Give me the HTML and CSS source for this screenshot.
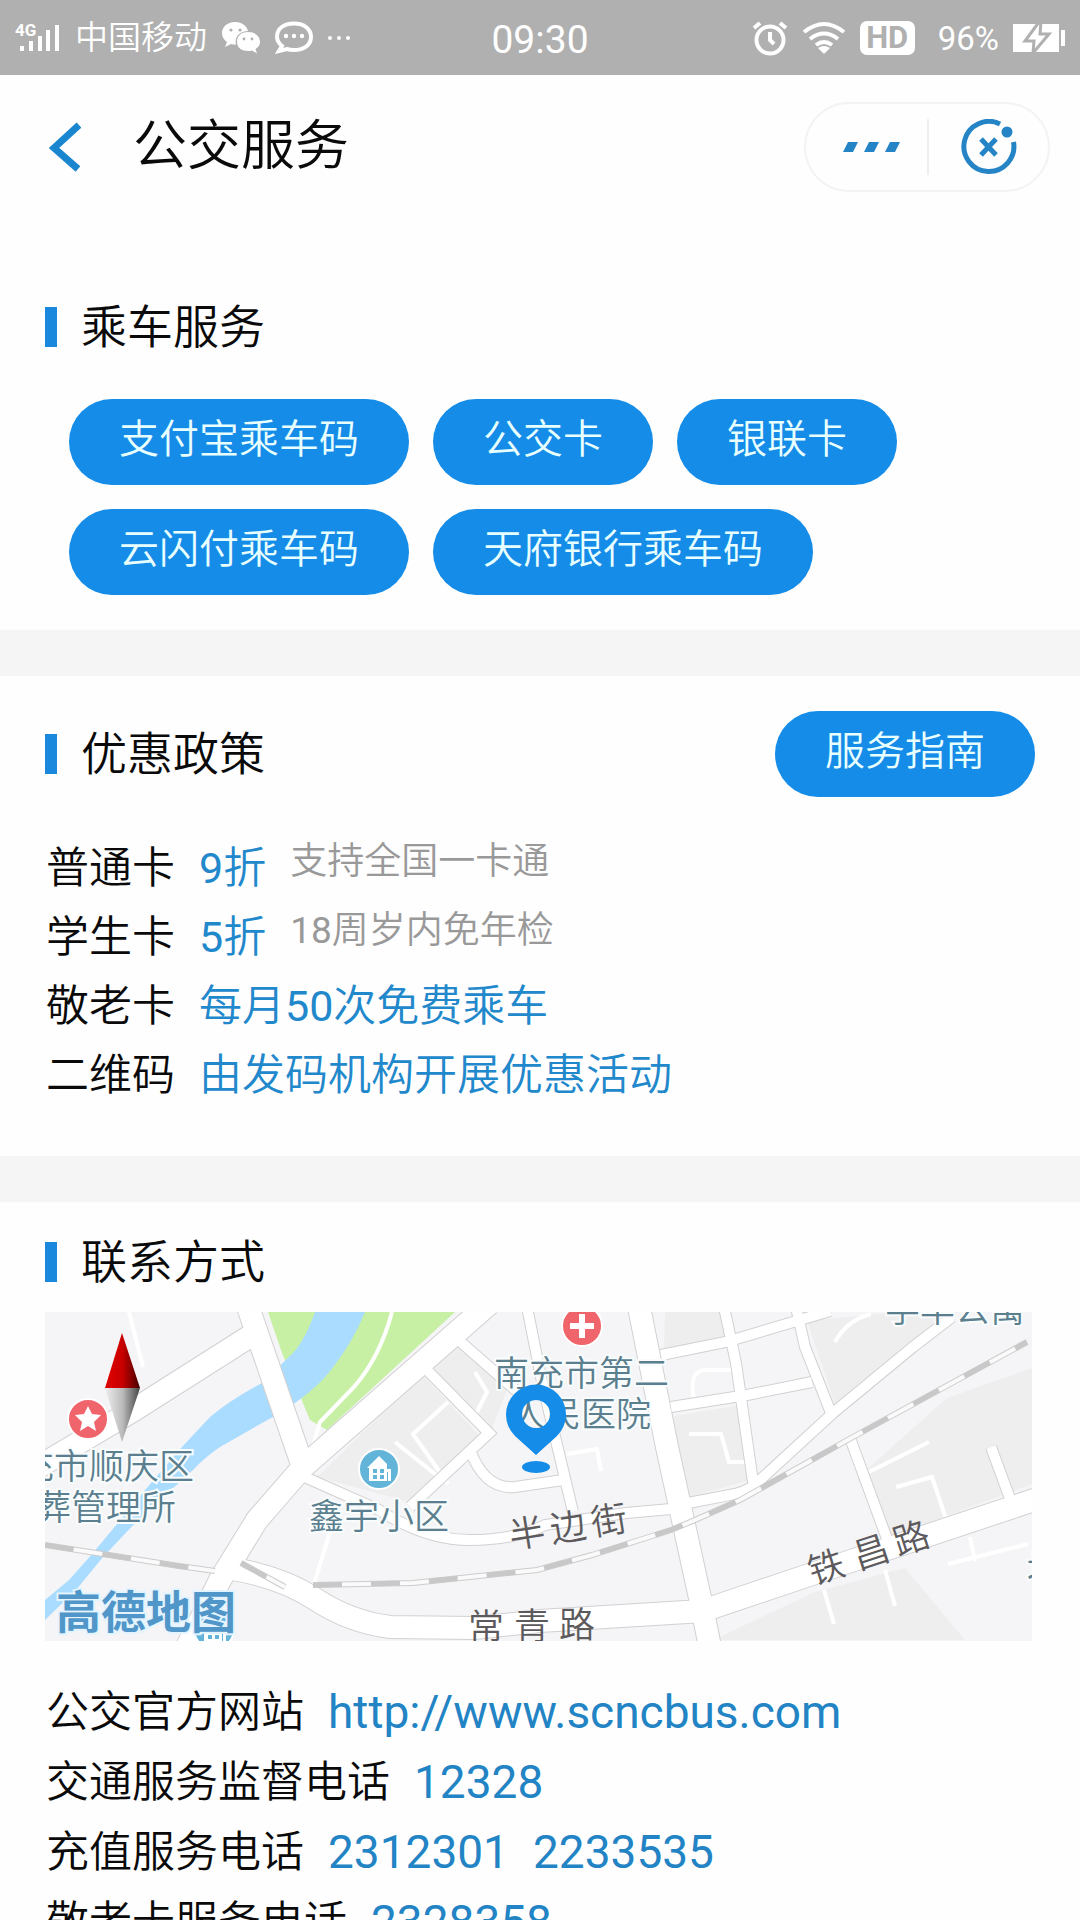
FILE: index.html
```html
<!DOCTYPE html>
<html lang="zh-CN">
<head>
<meta charset="utf-8">
<meta name="viewport" content="width=device-width, initial-scale=1">
<title>公交服务</title>
<link rel="stylesheet" href="styles.css">
</head>
<body>
<div class="status">
  <div class="status-group">
    <svg class="signal" width="46" height="32" viewBox="0 0 46 32" aria-hidden="true">
      <text class="signal-text" x="0" y="14">4G</text>
      <path d="M5 24h4v5h-4zM14 19h4v10h-4zM23 14h4v15h-4zM31 8h4v21h-4zM40 3h4v26h-4z"/>
    </svg>
    <span class="carrier">中国移动</span>
    <svg class="wechat" width="40" height="34" viewBox="0 0 40 34" aria-hidden="true">
      <path d="M14 1C6 1 1 6 1 12c0 4 2 7 5 9l-2 5 6-3c2 .5 3 .6 5 .5C13 15 20 10 27 10 26 5 21 1 14 1z"/>
      <path d="M27 11c-7 0-11 4-11 10s5 9 11 9c1.500 0 3 0 4-.6l5 3-1.500-4.400c3-2 4.500-4 4.500-7 0-6-5-10-12-10z"/>
      <g class="cut"><circle cx="10" cy="9" r="1.600"/><circle cx="19" cy="9" r="1.600"/><circle cx="23" cy="18" r="1.400"/><circle cx="31" cy="18" r="1.400"/></g>
    </svg>
    <svg width="38" height="34" viewBox="1 0 38 34" aria-hidden="true">
      <path class="line" d="M20 2.500c-10 0-17 5-17 13 0 4 2 7 5 9.500L5 30l8-2c2 .7 5 1 7 1 10 0 17-5 17-13S30 2.500 20 2.500z"/>
      <circle cx="12" cy="15" r="2.200"/><circle cx="20" cy="15" r="2.200"/><circle cx="28" cy="15" r="2.200"/>
    </svg>
    <svg width="24" height="34" viewBox="0 0 24 34" aria-hidden="true"><circle cx="3" cy="17" r="2"/><circle cx="12" cy="17" r="2"/><circle cx="21" cy="17" r="2"/></svg>
  </div>
  <time class="clock">09:30</time>
  <div class="status-group status-right">
    <svg width="36" height="36" viewBox="0 0 36 36" aria-hidden="true">
      <circle class="line" cx="18" cy="20" r="13.500"/><path class="line" d="M18 12v8l4 4M2 8l6-5M34 8l-6-5"/>
    </svg>
    <svg width="44" height="34" viewBox="0 0 44 34" aria-hidden="true">
      <path class="line" d="M2 11q20-16 40 0M8 18q14-11 28 0M14 24q8-6 16 0"/><path d="M16 27q6-4 12 0l-6 6z"/>
    </svg>
    <span class="hd">HD</span>
    <span class="percent">96%</span>
    <svg width="52" height="32" viewBox="0 0 52 32" aria-hidden="true">
      <path d="M0 2h46v28H0zM48 8h4v16h-4z"/>
      <path class="bolt" d="M26 0L12 19h9l-1 12 16-19h-9l1-12z"/>
    </svg>
  </div>
</div>

<header class="nav">
  <button class="back" type="button" aria-label="返回">
    <svg width="36" height="50" viewBox="0 0 36 50" aria-hidden="true"><path d="M34 3L9 26 33 47" /></svg>
  </button>
  <h1 class="nav-title">公交服务</h1>
  <div class="capsule">
    <button type="button" aria-label="更多">
      <svg width="58" height="10" viewBox="0 0 58 10" aria-hidden="true"><path d="M5 0h10l-5 10H0zM26 0h10l-5 10H21zM47 0h10l-5 10H42z"/></svg>
    </button>
    <button type="button" aria-label="关闭">
      <svg width="56" height="56" viewBox="0 0 56 56" aria-hidden="true">
        <path class="ring" d="M39 5A25 25 0 1 0 52.500 23"/>
        <path class="cross" d="M20 20l15 16M35 20L20 36"/>
        <circle cx="46" cy="13" r="5.500"/>
      </svg>
    </button>
  </div>
</header>

<main class="content">
  <section class="card rides">
    <h2 class="heading">乘车服务</h2>
    <div class="pills">
      <button class="pill" type="button">支付宝乘车码</button>
      <button class="pill" type="button">公交卡</button>
      <button class="pill" type="button">银联卡</button>
      <button class="pill" type="button">云闪付乘车码</button>
      <button class="pill" type="button">天府银行乘车码</button>
    </div>
  </section>

  <section class="card policy">
    <div class="card-head">
      <h2 class="heading">优惠政策</h2>
      <button class="pill" type="button">服务指南</button>
    </div>
    <dl class="rows">
      <div class="row"><dt>普通卡</dt><dd class="offer"><span class="num">9</span>折</dd><dd class="hint">支持全国一卡通</dd></div>
      <div class="row"><dt>学生卡</dt><dd class="offer"><span class="num">5</span>折</dd><dd class="hint"><span class="num">18</span>周岁内免年检</dd></div>
      <div class="row"><dt>敬老卡</dt><dd class="offer">每月<span class="num">50</span>次免费乘车</dd></div>
      <div class="row"><dt>二维码</dt><dd class="offer">由发码机构开展优惠活动</dd></div>
    </dl>
  </section>

  <section class="card contact">
    <h2 class="heading">联系方式</h2>
    <svg class="map" viewBox="0 0 987 329" role="img" aria-label="地图">
      <defs>
        <linearGradient id="needle-red"><stop offset="0" stop-color="#e00000"/><stop offset=".5" stop-color="#c80000"/><stop offset="1" stop-color="#400"/></linearGradient>
        <linearGradient id="needle-gray"><stop offset="0" stop-color="#eee"/><stop offset=".5" stop-color="#bbb"/><stop offset="1" stop-color="#444"/></linearGradient>
        <g id="house"><circle class="poi-blue" r="20"/><path class="poi-mark" d="M-12-1L0-13 8-5v5h4v12h-22V-1z"/><path class="poi-hole" d="M-6 0h4v4h-4zM1 0h4v4h-4zM-6 6h4v4h-4zM1 6h4v4h-4zM8 3h1v9h-1z"/></g>
        <path id="main-roads" d="M203-5L258 155M215 18L89 98-5 154M444-8L258 155 212 208 175 268 142 335M182 256Q235 264 270 287T345 315L430 316 495 309 657 299 770 261 995 186M594-5L622 135 657 295 665 335"/>
        <path id="side-roads" d="M616 43L681 30 785-1M626 95L702 83 767 70M679-5L691 51 708 170M751-5L760 35 786 101M643 191L690 182Q706 178 715 168L788 101 868 35 907 5M805 126L845 235M946 135L967 192M382 58L444 121 365 195M410 25L475 82M255 163L334 198Q380 228 425 228T500 213L581 201 626 197M425 138Q440 178 470 175L518 168M482-5L497 70 528 200"/>
      </defs>
      <rect class="land" width="987" height="329"/>
      <path class="block" d="M377 63L403 90 434 123 365 190 272 165zM620 0h56l5 25-62 14zM628 104l68-11 10 75-66 18zM762 9l90-9h60L790 92zM812 166l90-80 85-30v116L845 225zM770 280l90-24 60 72H668zM386 55l30-28 50 40-20 52z"/>
      <path class="green" d="M223 0H410L282 118 265 108 237 41z"/>
      <path class="water" d="M270 0H320Q308 30 286 58T217 111L175 135Q160 145 148 158L93 208 58 245 31 278 0 308V288L24 268 48 241 106 171 137 135 165 105Q185 88 217 71L248 41Q260 28 270 0z"/>
      <path class="lane" d="M347 0Q335 45 309 75L275 110 266 140M84 0l14 55M430 60l12 20-10 20M350 130l50 40M403 90l-35 32 35 50M265 285l20-65M649 88q-6-30 12-30h28M644 122h32l8 28h20M522 142l30-5 4 22M824 160l60-30M851 175l36-10 14 42M779 278l10 34M840 258l10 36M925 225l5 24M903 252l80-20M790 30q12-22 36-28"/>
      <use href="#main-roads" class="casing wide"/>
      <use href="#side-roads" class="casing thin"/>
      <use href="#main-roads" class="fill wide"/>
      <use href="#side-roads" class="fill thin"/>
      <path class="rail-edge" d="M0 233L134 254 170 259M196 251L240 275M268 273L368 271 492 258 547 243 626 218 650 208 695 188 808 125 982 30"/>
      <path class="rail" d="M0 233L134 254 170 259M196 251L240 275M268 273L368 271 492 258 547 243 626 218 650 208 695 188 808 125 982 30"/>
      <path class="rail-dash" d="M0 233L134 254 170 259M196 251L240 275M268 273L368 271 492 258 547 243 626 218 650 208 695 188 808 125 982 30"/>

      <g class="place">
        <text x="-26" y="167">充市顺庆区</text>
        <text x="-9" y="208">葬管理所</text>
        <text x="264" y="217">鑫宇小区</text>
        <text x="449" y="74">南充市第二</text>
        <text x="466" y="115">人民医院</text>
        <text x="840" y="10">学华公寓</text>
        <text x="982" y="270">地</text>
      </g>
      <g class="street">
        <text transform="translate(482 221) rotate(-9)" y="13">半</text>
        <text transform="translate(523 215) rotate(-9)" y="13">边</text>
        <text transform="translate(564 208) rotate(-9)" y="13">街</text>
        <text transform="translate(781 255) rotate(-18)" y="13">铁</text>
        <text transform="translate(826 240) rotate(-18)" y="13">昌</text>
        <text transform="translate(866 226) rotate(-18)" y="13">路</text>
        <text x="441" y="328">常</text>
        <text x="487" y="327">青</text>
        <text x="532" y="326">路</text>
      </g>
      <circle class="poi-red" cx="43" cy="107" r="20"/>
      <path class="poi-mark" d="M43 94l4 8 9 1-7 7 2 9-8-5-8 5 2-9-7-7 9-1z"/>
      <circle class="poi-red" cx="537" cy="14" r="20"/>
      <path class="poi-mark" d="M534 2h6v9h9v6h-9v9h-6v-9h-9v-6h9z"/>
      <use href="#house" x="334" y="157"/>
      <use href="#house" x="169" y="317"/>
      <path fill="url(#needle-red)" d="M77 21L95 76H60z"/>
      <path fill="url(#needle-gray)" d="M60 76H95L77 130z"/>
      <path class="pin" fill-rule="evenodd" d="M491 143L470 124A30 30 0 1 1 512 124zM491 88a14 14 0 1 0 .1 0z"/>
      <ellipse class="pin" cx="491" cy="155" rx="14" ry="6"/>
      <text class="map-logo" x="11" y="317">高德地图</text>
    </svg>
    <dl class="rows">
      <div class="row"><dt>公交官方网站</dt><dd><a href="http://www.scncbus.com">http://www.scncbus.com</a></dd></div>
      <div class="row"><dt>交通服务监督电话</dt><dd><a href="tel:12328">12328</a></dd></div>
      <div class="row"><dt>充值服务电话</dt><dd><a href="tel:2312301">2312301</a></dd><dd><a href="tel:2233535">2233535</a></dd></div>
      <div class="row"><dt>敬老卡服务电话</dt><dd><a href="tel:2328358">2328358</a></dd></div>
    </dl>
  </section>
</main>
</body>
</html>
```
FILE: styles.css
```css
* { box-sizing: border-box; }

body {
  margin: 0;
  height: 100vh;
  display: flex;
  flex-direction: column;
  overflow: hidden;
  background: #fefefe;
  color: #0a0a0a;
  font-family: Roboto, "Noto Sans CJK SC", sans-serif;
  font-weight: 350;
}

h1, h2, dl, dd { margin: 0; font-weight: inherit; }

button {
  border: 0;
  padding: 0;
  background: none;
  font: inherit;
  color: inherit;
}

svg { display: block; flex: none; }

/* Status bar */
.status {
  flex: none;
  display: grid;
  grid-template-columns: 1fr auto 1fr;
  align-items: center;
  height: 75px;
  padding: 0 15px;
  background: #b0b0b0;
  color: #fff;
}
.status svg { fill: #fff; }
.status .line { fill: none; stroke: #fff; stroke-width: 4; }
.status .cut { fill: #b0b0b0; }
.status .bolt { fill: #fff; stroke: #b0b0b0; stroke-width: 3; }
.status-group { display: flex; align-items: center; gap: 14px; }
.status-right { justify-content: flex-end; }
.signal-text { font-size: 17px; font-weight: 700; }
.carrier { font-size: 33px; line-height: 40px; }
.clock { font-size: 39px; line-height: 48px; font-weight: 400; padding-top: 4px; }
.hd {
  width: 55px;
  height: 34px;
  border-radius: 7px;
  background: #fff;
  color: #b0b0b0;
  font-size: 31px;
  font-weight: 700;
  line-height: 34px;
  text-align: center;
}
.percent { font-size: 33px; line-height: 40px; font-weight: 400; padding: 3px 0 0 9px; }

/* Title bar */
.nav {
  flex: none;
  display: flex;
  align-items: center;
  height: 144px;
  padding: 0 30px 0 45px;
}
.back svg { fill: none; stroke: #1a86cf; stroke-width: 7; }
.nav-title { flex: 1; padding-left: 52px; font-size: 54px; line-height: 70px; }
.capsule {
  display: grid;
  grid-template-columns: 1fr 1fr;
  align-items: center;
  width: 246px;
  height: 90px;
  border: 2px solid #f3f3f6;
  border-radius: 45px;
}
.capsule button { display: flex; align-items: center; justify-content: center; height: 56px; }
.capsule button:first-child { padding-left: 10px; }
.capsule button + button { border-left: 2px solid #eceef0; }
.capsule svg { fill: #2484c6; }
.ring, .cross { fill: none; stroke: #2484c6; stroke-width: 5; }

/* Sections */
.content { flex: 1; min-height: 0; overflow-y: auto; scrollbar-width: none; }
.card { padding: 35px 45px; }
.card + .card { border-top: 46px solid #f5f5f5; }
.rides { padding-top: 78px; }
.policy { padding-bottom: 46px; }
.contact { padding: 30px 48px 35px 45px; }
.card-head { display: flex; align-items: center; justify-content: space-between; }

.heading {
  display: flex;
  align-items: center;
  gap: 24px;
  font-size: 46px;
  line-height: 60px;
}
.heading::before { content: ""; width: 12px; height: 40px; background: #1a88dc; }

.pills { display: flex; flex-wrap: wrap; gap: 24px; padding: 42px 24px 0; }
.pill {
  height: 86px;
  padding: 0 50px 4px;
  border-radius: 43px;
  background: #148ce8;
  color: #e8ffff;
  font-size: 40px;
  line-height: 82px;
}

.rows { padding-top: 37px; }
.row {
  display: flex;
  gap: 24px;
  padding-left: 1px;
  font-size: 43px;
  line-height: 69px;
  white-space: nowrap;
}
.num { font-weight: 400; }
.offer { color: #2288cc; }
.hint { color: #999; font-size: 37px; line-height: 56px; }
.row a { color: #2284c4; font-size: 46px; font-weight: 400; text-decoration: none; }

/* Map */
.map { width: 100%; height: auto; margin-top: 20px; overflow: hidden; }
.land { fill: #f5f5f7; }
.block { fill: #eeeeef; }
.green { fill: #c8f0a4; }
.water { fill: #aadcff; }
.lane { fill: none; stroke: #fff; stroke-width: 4; }
.casing, .fill, .rail, .rail-edge, .rail-dash { fill: none; }
.casing { stroke: #d2d0d2; }
.fill { stroke: #fff; }
.casing.wide { stroke-width: 24; }
.fill.wide { stroke-width: 22; }
.casing.thin { stroke-width: 12; }
.fill.thin { stroke-width: 10; }
.rail-edge { stroke: #ccc; stroke-width: 6; }
.rail { stroke: #fafafa; stroke-width: 4; }
.rail-dash { stroke: #c8c8c8; stroke-width: 5; stroke-dasharray: 29 29; }
.place { fill: #5b7f8e; font-size: 35px; stroke: #f8fcfd; stroke-width: 4; paint-order: stroke; }
.street { fill: #5c5a5c; font-size: 36px; text-anchor: middle; }
.poi-red { fill: #f0646c; stroke: #fff; stroke-width: 2; }
.poi-blue { fill: #62b4d8; stroke: #fff; stroke-width: 2; }
.poi-mark { fill: #fff; }
.poi-hole { fill: #62b4d8; }
.pin { fill: #148ce8; }
.map-logo { fill: #5096c8; stroke: #e4f4ff; stroke-width: 4; paint-order: stroke; font-size: 45px; font-weight: 700; }
```
